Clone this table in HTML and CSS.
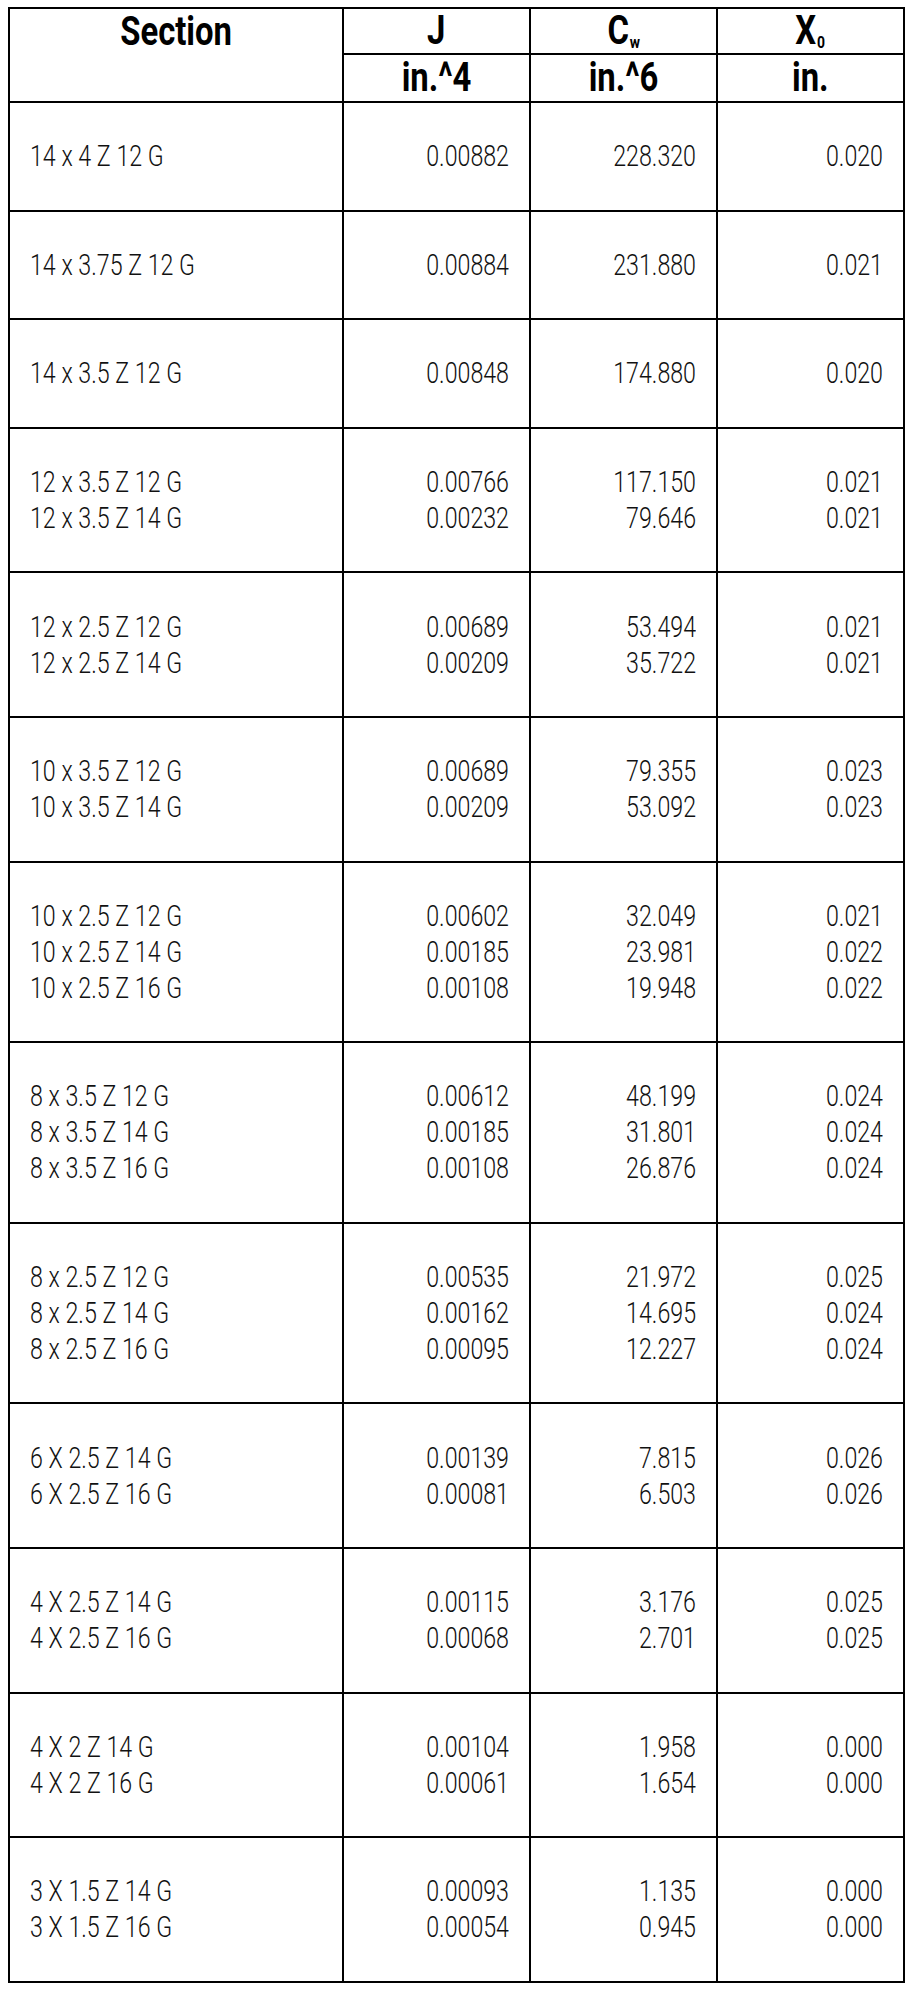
FILE: index.html
```html
<!DOCTYPE html>
<html>
<head>
<meta charset="utf-8">
<link rel="stylesheet" href="styles.css">
</head>
<body>
<table class="zt">
  <colgroup>
    <col class="c-sec">
    <col class="c-num">
    <col class="c-num">
    <col class="c-num">
  </colgroup>
  <thead>
    <tr class="hr1">
      <th rowspan="2" class="h-sec"><span class="ht">Section</span></th>
      <th><span class="ht">J</span></th>
      <th><span class="ht">C<sub>w</sub></span></th>
      <th><span class="ht">X<sub>0</sub></span></th>
    </tr>
    <tr class="hr2">
      <th><span class="ht">in.^4</span></th>
      <th><span class="ht">in.^6</span></th>
      <th><span class="ht">in.</span></th>
    </tr>
  </thead>
  <tbody>
    <tr>
      <td class="sec"><div>14 x 4 Z 12 G</div></td>
      <td class="num"><div>0.00882</div></td>
      <td class="num"><div>228.320</div></td>
      <td class="num"><div>0.020</div></td>
    </tr>
    <tr>
      <td class="sec"><div>14 x 3.75 Z 12 G</div></td>
      <td class="num"><div>0.00884</div></td>
      <td class="num"><div>231.880</div></td>
      <td class="num"><div>0.021</div></td>
    </tr>
    <tr>
      <td class="sec"><div>14 x 3.5 Z 12 G</div></td>
      <td class="num"><div>0.00848</div></td>
      <td class="num"><div>174.880</div></td>
      <td class="num"><div>0.020</div></td>
    </tr>
    <tr>
      <td class="sec"><div>12 x 3.5 Z 12 G</div><div>12 x 3.5 Z 14 G</div></td>
      <td class="num"><div>0.00766</div><div>0.00232</div></td>
      <td class="num"><div>117.150</div><div>79.646</div></td>
      <td class="num"><div>0.021</div><div>0.021</div></td>
    </tr>
    <tr>
      <td class="sec"><div>12 x 2.5 Z 12 G</div><div>12 x 2.5 Z 14 G</div></td>
      <td class="num"><div>0.00689</div><div>0.00209</div></td>
      <td class="num"><div>53.494</div><div>35.722</div></td>
      <td class="num"><div>0.021</div><div>0.021</div></td>
    </tr>
    <tr>
      <td class="sec"><div>10 x 3.5 Z 12 G</div><div>10 x 3.5 Z 14 G</div></td>
      <td class="num"><div>0.00689</div><div>0.00209</div></td>
      <td class="num"><div>79.355</div><div>53.092</div></td>
      <td class="num"><div>0.023</div><div>0.023</div></td>
    </tr>
    <tr>
      <td class="sec"><div>10 x 2.5 Z 12 G</div><div>10 x 2.5 Z 14 G</div><div>10 x 2.5 Z 16 G</div></td>
      <td class="num"><div>0.00602</div><div>0.00185</div><div>0.00108</div></td>
      <td class="num"><div>32.049</div><div>23.981</div><div>19.948</div></td>
      <td class="num"><div>0.021</div><div>0.022</div><div>0.022</div></td>
    </tr>
    <tr>
      <td class="sec"><div>8 x 3.5 Z 12 G</div><div>8 x 3.5 Z 14 G</div><div>8 x 3.5 Z 16 G</div></td>
      <td class="num"><div>0.00612</div><div>0.00185</div><div>0.00108</div></td>
      <td class="num"><div>48.199</div><div>31.801</div><div>26.876</div></td>
      <td class="num"><div>0.024</div><div>0.024</div><div>0.024</div></td>
    </tr>
    <tr>
      <td class="sec"><div>8 x 2.5 Z 12 G</div><div>8 x 2.5 Z 14 G</div><div>8 x 2.5 Z 16 G</div></td>
      <td class="num"><div>0.00535</div><div>0.00162</div><div>0.00095</div></td>
      <td class="num"><div>21.972</div><div>14.695</div><div>12.227</div></td>
      <td class="num"><div>0.025</div><div>0.024</div><div>0.024</div></td>
    </tr>
    <tr>
      <td class="sec"><div>6 X 2.5 Z 14 G</div><div>6 X 2.5 Z 16 G</div></td>
      <td class="num"><div>0.00139</div><div>0.00081</div></td>
      <td class="num"><div>7.815</div><div>6.503</div></td>
      <td class="num"><div>0.026</div><div>0.026</div></td>
    </tr>
    <tr>
      <td class="sec"><div>4 X 2.5 Z 14 G</div><div>4 X 2.5 Z 16 G</div></td>
      <td class="num"><div>0.00115</div><div>0.00068</div></td>
      <td class="num"><div>3.176</div><div>2.701</div></td>
      <td class="num"><div>0.025</div><div>0.025</div></td>
    </tr>
    <tr>
      <td class="sec"><div>4 X 2 Z 14 G</div><div>4 X 2 Z 16 G</div></td>
      <td class="num"><div>0.00104</div><div>0.00061</div></td>
      <td class="num"><div>1.958</div><div>1.654</div></td>
      <td class="num"><div>0.000</div><div>0.000</div></td>
    </tr>
    <tr>
      <td class="sec"><div>3 X 1.5 Z 14 G</div><div>3 X 1.5 Z 16 G</div></td>
      <td class="num"><div>0.00093</div><div>0.00054</div></td>
      <td class="num"><div>1.135</div><div>0.945</div></td>
      <td class="num"><div>0.000</div><div>0.000</div></td>
    </tr>
  </tbody>
</table>
</body>
</html>
```
FILE: styles.css
```css
html, body {
  background: #ffffff;
}
body {
  margin: 7px 8px;
  font-family: Roboto, "Liberation Sans", sans-serif;
  color: #111;
}
.zt {
  border-collapse: collapse;
  table-layout: fixed;
  width: 895px;
}
.c-sec { width: 334px; }
.c-num { width: 187px; }
.zt th,
.zt td {
  border: 2px solid #000;
}
.zt th {
  font-weight: bold;
  font-size: 40px;
  color: #000;
  padding: 0;
  text-align: center;
  line-height: 40px;
}
.ht {
  display: inline-block;
  transform: scaleX(0.82);
  transform-origin: center;
}
.hr1 th { height: 44px; vertical-align: middle; }
.hr2 th { height: 46px; vertical-align: middle; }
.h-sec {
  vertical-align: top !important;
  padding-top: 3px !important;
}
.zt th sub {
  font-size: 17px;
  line-height: 0;
  vertical-align: -4px;
  margin-left: 1px;
}
.zt td {
  font-size: 29px;
  font-weight: 300;
  line-height: 36px;
  padding: 35.3px 20px;
  vertical-align: middle;
}
.zt td div {
  transform: scaleX(0.8);
  white-space: nowrap;
}
.sec { text-align: left; }
.sec div { transform-origin: left center; }
.num { text-align: right; }
.num div { transform-origin: right center; }
```
